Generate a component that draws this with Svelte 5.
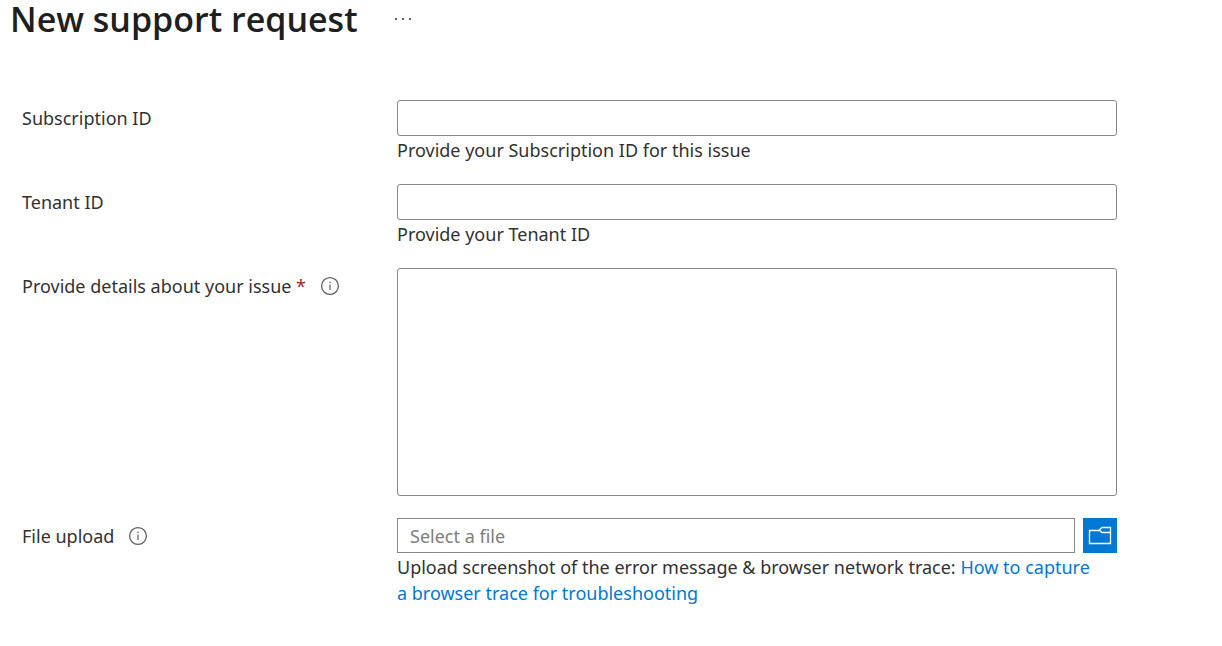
<script>
    let subscriptionId = $state("");
    let tenantId = $state("");
    let details = $state("");
    let fileName = $state("");
    let filePicker;

    function onFileChange(event) {
        fileName = event.target.files[0]?.name ?? "";
    }
</script>

{#snippet infoIcon()}
    <svg class="info-icon" viewBox="0 0 20 20" aria-hidden="true">
        <circle cx="10" cy="10" r="8.4" fill="none" stroke="currentColor" stroke-width="1.3" />
        <path d="M10 8.5v5.5" stroke="currentColor" stroke-width="1.2" />
        <circle cx="10" cy="6.2" r="0.8" fill="currentColor" />
    </svg>
{/snippet}

<main>
    <header>
        <h1>New support request</h1>
        <button class="more" type="button" aria-label="More actions">
            <svg viewBox="0 0 18 4" aria-hidden="true">
                <circle cx="2" cy="2" r="1" />
                <circle cx="9" cy="2" r="1" />
                <circle cx="16" cy="2" r="1" />
            </svg>
        </button>
    </header>

    <form>
        <div class="row">
            <div class="label">
                <label for="subscription">Subscription ID</label>
            </div>
            <div class="field">
                <input id="subscription" type="text" bind:value={subscriptionId} />
                <p>Provide your Subscription ID for this issue</p>
            </div>
        </div>

        <div class="row">
            <div class="label">
                <label for="tenant">Tenant ID</label>
            </div>
            <div class="field">
                <input id="tenant" type="text" bind:value={tenantId} />
                <p>Provide your Tenant ID</p>
            </div>
        </div>

        <div class="row">
            <div class="label">
                <label for="details">
                    Provide details about your issue <span class="required">*</span>
                </label>
                {@render infoIcon()}
            </div>
            <div class="field">
                <textarea id="details" required bind:value={details}></textarea>
            </div>
        </div>

        <div class="row">
            <div class="label">
                <label for="file">File upload</label>
                {@render infoIcon()}
            </div>
            <div class="field">
                <div class="upload">
                    <input id="file" type="text" placeholder="Select a file" readonly value={fileName} />
                    <button
                        class="browse"
                        type="button"
                        aria-label="Browse for a file"
                        onclick={() => filePicker.click()}
                    >
                        <svg viewBox="0 0 24 21" aria-hidden="true">
                            <path
                                d="M11.5 5.5H1.5v13h21v-16h-8.5l-2.8 2.6 2.8 2.4h8.5"
                                fill="none"
                                stroke="currentColor"
                                stroke-width="1.3"
                            />
                        </svg>
                    </button>
                    <input type="file" hidden bind:this={filePicker} onchange={onFileChange} />
                </div>
                <p>
                    Upload screenshot of the error message &amp; browser network trace:
                    <a href="#browser-trace">How to capture a browser trace for troubleshooting</a>
                </p>
            </div>
        </div>
    </form>
</main>

<style>
    :global(body) {
        background: #ffffff;
    }

    main {
        color: #323130;
        font-family: "Segoe UI", "Noto Sans", "Open Sans", sans-serif;
        font-size: 18px;
        line-height: 26px;
    }

    header {
        display: flex;
        align-items: center;
        gap: 28px;
        padding-left: 10px;
    }

    h1 {
        margin: 0;
        color: #201f1e;
        font-family: "Segoe UI", "Open Sans", sans-serif;
        font-size: 34px;
        font-weight: 600;
        line-height: 38px;
    }

    button {
        padding: 0;
        border: none;
        cursor: pointer;
    }

    .more {
        display: flex;
        padding: 8px;
        background: none;
        color: #323130;
    }

    .more svg {
        width: 18px;
        height: 4px;
        fill: currentColor;
    }

    form {
        display: flex;
        flex-direction: column;
        gap: 21px;
        padding: 62px 105px 40px 22px;
    }

    .row {
        display: grid;
        grid-template-columns: 375px minmax(0, 1fr);
    }

    .label {
        display: flex;
        align-items: center;
        gap: 14px;
        height: 36px;
    }

    .required {
        color: #a4262c;
    }

    .info-icon {
        width: 20px;
        height: 20px;
        color: #605e5c;
    }

    input,
    textarea {
        display: block;
        box-sizing: border-box;
        width: 100%;
        height: 36px;
        padding: 0 12px;
        border: 1px solid #8a8886;
        border-radius: 3px;
        background: #ffffff;
        color: inherit;
        font: inherit;
    }

    textarea {
        height: 228px;
        margin-bottom: 1px;
        padding: 6px 12px;
        resize: none;
    }

    ::placeholder {
        color: #7f7d7b;
        opacity: 1;
    }

    p {
        margin: 0;
        padding: 1px 16px 0 0;
    }

    .upload {
        display: flex;
        gap: 8px;
    }

    .upload input {
        flex: 1;
        min-width: 0;
        height: 35px;
        border-radius: 0;
    }

    .upload input[hidden] {
        display: none;
    }

    .browse {
        display: flex;
        align-items: center;
        justify-content: center;
        width: 34px;
        height: 35px;
        background: #0078d4;
        color: #ffffff;
    }

    .browse svg {
        width: 24px;
        height: 21px;
    }

    a {
        color: #0078d4;
        text-decoration: none;
    }

    a:hover {
        text-decoration: underline;
    }
</style>
